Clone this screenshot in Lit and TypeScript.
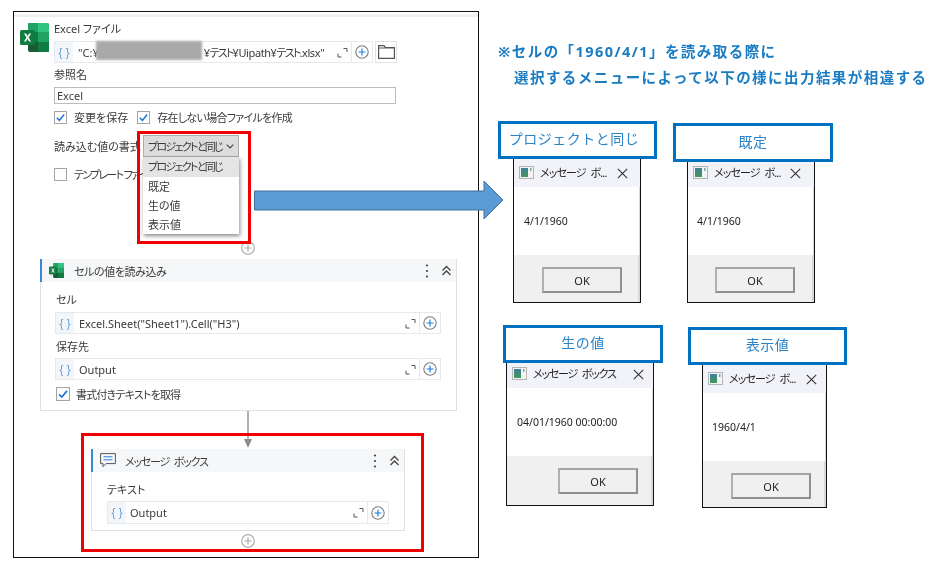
import { LitElement, html, css, svg } from "lit";
import { customElement } from "lit/decorators.js";

interface Dlg { label: string; bx: number; by: number; bw: number; bh: number; dx: number; dy: number; dw: number; dh: number; title: string; value: string; barH: number; bodyH: number; xRight: number; textLeft: number; okLeft: number; tagShift: number; titleSp: number }

const DIALOGS: Dlg[] = [
  { label: "プロジェクトと同じ", bx: 498, by: 121, bw: 159, bh: 38, dx: 513, dy: 159, dw: 128, dh: 144, title: "メッセージ ボ...", value: "4/1/1960", barH: 28, bodyH: 68, xRight: 12, textLeft: 10, okLeft: 28, tagShift: 7, titleSp: -0.9 },
  { label: "既定", bx: 673, by: 123, bw: 160, bh: 39, dx: 687, dy: 162, dw: 128, dh: 141, title: "メッセージ ボ...", value: "4/1/1960", barH: 25, bodyH: 68, xRight: 13, textLeft: 9, okLeft: 27, tagShift: 0, titleSp: -0.9 },
  { label: "生の値", bx: 503, by: 325, bw: 160, bh: 38, dx: 506, dy: 363, dw: 148, dh: 143, title: "メッセージ ボックス", value: "04/01/1960 00:00:00", barH: 25, bodyH: 68, xRight: 9, textLeft: 10, okLeft: 51, tagShift: 0, titleSp: -1.2 },
  { label: "表示値", bx: 688, by: 327, bw: 159, bh: 38, dx: 702, dy: 365, dw: 125, dh: 143, title: "メッセージ ボ...", value: "1960/4/1", barH: 28, bodyH: 68, xRight: 9, textLeft: 9, okLeft: 28, tagShift: 0, titleSp: -0.9 },
];

const excelIcon = (s: number) => html`<svg class="xl" width=${s} height=${s} viewBox="0 0 29 29">
  <path d="M8 0h19a2 2 0 0 1 2 2v7H8z" fill="#21a366"/><path d="M18 0h9a2 2 0 0 1 2 2v7H18z" fill="#33c481"/>
  <rect x="8" y="9" width="10" height="10" fill="#107c41"/><rect x="18" y="9" width="11" height="10" fill="#21a366"/>
  <path d="M8 19h21v8a2 2 0 0 1-2 2H10a2 2 0 0 1-2-2z" fill="#185c37"/><rect x="18" y="19" width="11" height="10" rx="1" fill="#107c41"/>
  <rect x="0" y="7" width="15" height="15" rx="1.5" fill="#107c41"/>
  <path d="M4 10.5h2.100l1.500 2.800 1.500-2.800h2l-2.500 4 2.500 4H9l-1.500-2.800L6 18.500H4l2.500-4z" fill="#fff"/>
</svg>`;

const plusIcon = svg`<circle cx="7" cy="7" r="6.200" fill="#fff" stroke="#7d7d7d" stroke-width="1.100"/><path d="M7 3.500v7M3.500 7h7" stroke="#1f80e0" stroke-width="1.200"/>`;
const expand = html`<svg class="exp" width="11" height="11" viewBox="0 0 11 11" fill="none" stroke="#555" stroke-width="1"><path d="M6.500 1.500h3.500v3.500M1 6.500v3.500h3.500"/></svg>`;
const plus = html`<span class="plusCell"><svg width="14" height="14" viewBox="0 0 14 14">${plusIcon}</svg></span>`;
const nodePlus = html`<svg width="14" height="14" viewBox="0 0 14 14"><circle cx="7" cy="7" r="6.300" fill="#fff" stroke="#b0b0b0" stroke-width="1.200"/><path d="M7 3.500v7M3.500 7h7" stroke="#a8a8a8" stroke-width="1.200"/></svg>`;
const check = html`<svg class="cb" width="13" height="13" viewBox="0 0 13 13"><rect x=".5" y=".5" width="12" height="12" fill="#fff" stroke="#a5a5a5"/><path d="M2.800 6.800l2.600 2.600 4.800-5.800" fill="none" stroke="#1b74d0" stroke-width="1.500"/></svg>`;
const chevrons = html`<svg class="chev" width="11" height="11" viewBox="0 0 11 11" fill="none" stroke="#444" stroke-width="1.300"><path d="M1.500 5.500l4-4 4 4M1.500 10l4-4 4 4"/></svg>`;
const dots = html`<svg class="dots" width="4" height="14" viewBox="0 0 4 14" fill="#444"><circle cx="2" cy="1.500" r="1.100"/><circle cx="2" cy="7" r="1.100"/><circle cx="2" cy="12.500" r="1.100"/></svg>`;

@customElement("app-root")
export class AppRoot extends LitElement {
  static styles = css`
    :host { display: block; width: 941px; height: 568px; position: relative; overflow: hidden; background: #fff; filter: blur(.35px);
      font-family: "Noto Sans", "Noto Sans CJK JP", sans-serif; font-size: 11px; color: #3a3a3a; font-feature-settings: "palt"; }
    .panel { position: absolute; left: 13px; top: 11px; width: 466px; height: 547px; box-sizing: border-box; border: 1px solid #111;
      display: flex; flex-direction: column; }
    .band { height: 3px; background: #f0f0f0; margin-top: 2px; flex: none; }
    .file { display: flex; gap: 5px; margin: 6px 0 0 6px; }
    .xl { flex: none; display: block; }
    .col { display: flex; flex-direction: column; }
    .lbl { line-height: 12px; height: 12px; white-space: nowrap; }
    .mb { margin-bottom: 6px; }
    .mt { margin-top: 6px; }
    .fieldRow { display: flex; gap: 2px; }
    .field { display: flex; align-items: center; height: 22px; box-sizing: border-box; border: 1px solid #e6e9ee; background: #fff; white-space: nowrap; }
    .brace { align-self: stretch; width: 18px; flex: none; background: #f3f6f9; color: #2f7fd0; display: flex; align-items: center; justify-content: center; font-size: 12px; font-weight: 300; }
    .val { flex: 1; padding-left: 5px; display: flex; align-items: center; min-width: 0; }
    .exp { flex: none; margin-right: 3px; }
    .plusCell { align-self: stretch; width: 20px; flex: none; border-left: 1px solid #e6e9ee; display: flex; align-items: center; justify-content: center; }
    .w319 { width: 319px; }
    .blurred { display: inline-block; width: 106px; height: 19px; margin: -3px 2px 0 -3px; background: #a9a9a9; filter: blur(1px); flex: none; }
    .tail { letter-spacing: -.4px; }
    .tail b { font-weight: 400; letter-spacing: -1.800px; }
    .folder { width: 22px; height: 22px; box-sizing: border-box; border: 1px solid #dfe3e9; display: flex; align-items: center; justify-content: center; flex: none; }
    .text { width: 342px; height: 17px; box-sizing: border-box; border: 1px solid #bcbcbc; padding-left: 2px; line-height: 15px; margin-bottom: 7px; }
    .checks { display: flex; align-items: center; height: 12px; white-space: nowrap; }
    .checks .cb { margin-right: 7px; flex: none; }
    .second { margin-left: 9px; display: flex; align-items: center; letter-spacing: -.7px; }
    .fmt { display: flex; align-items: center; height: 22px; margin: 12px 0 11px; }
    .fmtLbl { width: 89px; flex: none; white-space: nowrap; }
    .dd { position: relative; width: 96px; flex: none; }
    .ddBtn { height: 22px; box-sizing: border-box; border: 1px solid #adadad; background: #dcdcdc; display: flex; align-items: center; padding-left: 4px; gap: 4px; white-space: nowrap; letter-spacing: -1.700px; }
    .ddList { position: absolute; left: 0; top: 22px; width: 96px; background: #fff; box-shadow: 1px 2px 4px rgba(0,0,0,.45); z-index: 2; }
    .ddItem { height: 19px; line-height: 19px; padding-left: 5px; white-space: nowrap; letter-spacing: -1.700px; }
    .ddItem.plain { letter-spacing: 0; }
    .ddItem.on { background: #e4e4e4; height: 20px; }
    .tpl { letter-spacing: -1.700px; }
    .gapPlus { height: 79px; flex: none; display: flex; align-items: flex-end; padding: 0 0 4px 227px; box-sizing: border-box; }
    .card { box-sizing: border-box; border: 1px solid #dde1e6; flex: none; }
    .c1 { margin-left: 26px; width: 417px; height: 152px; }
    .c2 { margin-left: 77px; width: 314px; height: 82px; }
    .head { display: flex; align-items: center; background: #f6f7f8; height: 23px; border-left: 2px solid #3a86d0; margin: -1px 0 0 -1px; }
    .head .ttl { flex: 1; white-space: nowrap; }
    .c1 .ttl { letter-spacing: -.4px; }
    .c2 .ttl { letter-spacing: -1.200px; word-spacing: 3px; }
    .c1 .head .xl { margin: 0 10px 0 7px; }
    .msg { margin: 0 9px 0 7px; flex: none; }
    .dots { margin-right: 12px; }
    .chev { margin-right: 4px; }
    .body { display: flex; flex-direction: column; }
    .c1 .body { padding: 12px 15px 0 14px; }
    .c2 .body { padding: 12px 15px 0 15px; }
    .c1 .lbl { margin-left: 1px; }
    .c2 .lbl { margin-bottom: 5px; }
    .c2 .field { height: 23px; }
    .c2 .val { padding-left: 4px; }
    .c1 .gapTop { margin: 7px 0 5px 1px; }
    .taskCheck { display: flex; align-items: center; gap: 6px; margin: 6px 0 0 1px; white-space: nowrap; letter-spacing: -.8px; }
    .taskCheck .cb { width: 14px; height: 14px; }
    .conn { height: 38px; flex: none; margin-left: 228px; display: block; }
    .lastPlus { flex: none; margin: 3px 0 0 227px; display: block; }
    .redbox { position: absolute; box-sizing: border-box; border: 3px solid #f00000; z-index: 3; pointer-events: none; }
    .r1 { left: 137px; top: 131px; width: 114px; height: 113px; }
    .r2 { left: 81px; top: 433px; width: 343px; height: 119px; }
    .arrow { position: absolute; left: 254px; top: 180px; z-index: 1; }
    .note { position: absolute; left: 498px; top: 38px; font-weight: 700; font-size: 14.500px; color: #1a7cc2; line-height: 26px; white-space: nowrap; letter-spacing: 1.450px; font-feature-settings: normal; }
    .note div + div { padding-left: 16px; }
    .tag { position: absolute; box-sizing: border-box; border: 3px solid #0070c0; background: #fff; color: #2a84c8; font-size: 14px; display: flex; align-items: center; justify-content: center; white-space: nowrap; z-index: 2; letter-spacing: .5px; font-feature-settings: normal; padding-bottom: 4px; }
    .dlg { position: absolute; box-sizing: border-box; border: 1px solid #111; border-top: none; background: #f0f0f0; display: flex; flex-direction: column; box-shadow: inset -2px 0 0 #d8d8d8; }
    .bar { background: #f2f3f9; display: flex; align-items: flex-end; padding: 0 9px 8px 5px; flex: none; box-sizing: border-box; white-space: nowrap; color: #222; font-size: 11px; }
    .bar .t { flex: 1; margin-left: 6px; line-height: 12px; word-spacing: 3px; }
    .dIcon { flex: none; }
    .dBody { background: #fff; flex: none; display: flex; align-items: center; color: #222; font-size: 10.500px; margin-right: 1px; }
    .ok { width: 80px; height: 26px; box-sizing: border-box; margin-top: 12px; border: 2px solid #8f8f8f; border-top-color: #a5a5a5; border-left-color: #b0b0b0; background: #f0f0f0; color: #222; font-size: 11px; display: flex; align-items: center; justify-content: center; }
  `;

  private field(v: unknown, cls = "") {
    return html`<div class="field ${cls}"><span class="brace">{ }</span><span class="val">${v}</span>${expand}${plus}</div>`;
  }

  private dlgIcon() {
    return html`<svg class="dIcon" width="15" height="13" viewBox="0 0 15 13"><defs><linearGradient id="g" x1="0" y1="0" x2="0" y2="1"><stop offset="0" stop-color="#3f7f9c"/><stop offset="1" stop-color="#3d9a58"/></linearGradient></defs><rect x=".5" y=".5" width="14" height="12" fill="#f4f4f4" stroke="#b4b4b4"/><rect x="2" y="2" width="7" height="9" fill="url(#g)"/><rect x="11" y="2" width="1.500" height="3" fill="#7fa7a0"/></svg>`;
  }

  render() {
    return html`
      <div class="panel">
        <div class="band"></div>
        <div class="file">
          ${excelIcon(29)}
          <div class="col">
            <div class="lbl mb">Excel ファイル</div>
            <div class="fieldRow">
              ${this.field(html`"C:¥<span class="blurred"></span><span class="tail">¥<b>テスト</b>¥Uipath¥<b>テスト</b>.xlsx"</span>`, "w319")}
              <div class="folder"><svg width="17" height="14" viewBox="0 0 17 14" fill="none" stroke="#555" stroke-width="1.200"><path d="M.6 13.400V.6h5.400l1.600 2h8.800v10.800zM.6 3h15.800"/></svg></div>
            </div>
            <div class="lbl mt mb">参照名</div>
            <div class="text">Excel</div>
            <div class="checks">${check}<span>変更を保存</span><span class="second">${check}<span>存在しない場合ファイルを作成</span></span></div>
            <div class="fmt">
              <span class="fmtLbl">読み込む値の書式</span>
              <div class="dd">
                <div class="ddBtn">プロジェクトと同じ<svg width="8" height="5" viewBox="0 0 8 5" fill="none" stroke="#444" stroke-width="1.100"><path d="M.7.7L4 4l3.300-3.300"/></svg></div>
                <div class="ddList">
                  <div class="ddItem on">プロジェクトと同じ</div>
                  <div class="ddItem plain">既定</div>
                  <div class="ddItem plain">生の値</div>
                  <div class="ddItem plain">表示値</div>
                </div>
              </div>
            </div>
            <div class="checks"><svg class="cb" width="13" height="13" viewBox="0 0 13 13"><rect x=".5" y=".5" width="12" height="12" fill="#fff" stroke="#a5a5a5"/></svg><span class="tpl">テンプレート ファイ</span></div>
          </div>
        </div>
        <div class="gapPlus">${nodePlus}</div>
        <div class="card c1">
          <div class="head">${excelIcon(15)}<span class="ttl">セルの値を読み込み</span>${dots}${chevrons}</div>
          <div class="body">
            <div class="lbl mb">セル</div>
            ${this.field("Excel.Sheet(\"Sheet1\").Cell(\"H3\")")}
            <div class="lbl gapTop">保存先</div>
            ${this.field("Output")}
            <div class="taskCheck">${check}<span>書式付きテキストを取得</span></div>
          </div>
        </div>
        <svg class="conn" width="12" height="38" viewBox="0 0 12 38"><rect x="5" y="0" width="2" height="29" fill="#b0b0b0"/><path d="M2 28h8l-4 9z" fill="#8c8c8c"/></svg>
        <div class="card c2">
          <div class="head">
            <svg class="msg" width="16" height="15" viewBox="0 0 16 15" fill="none"><path d="M.6.6h14.800v10H6l-3 3v-3H.6z" stroke="#555" stroke-width="1"/><path d="M3.500 3.800h9M3.500 6.800h9" stroke="#1f80e0" stroke-width="1"/></svg>
            <span class="ttl">メッセージ ボックス</span>${dots}${chevrons}
          </div>
          <div class="body">
            <div class="lbl mb">テキスト</div>
            ${this.field("Output")}
          </div>
        </div>
        <div class="lastPlus">${nodePlus}</div>
      </div>

      <div class="redbox r1"></div>
      <div class="redbox r2"></div>

      <svg class="arrow" width="250" height="40" viewBox="0 0 250 40"><path d="M.5 11h229.500V1l19 19-19 19V30H.5z" fill="#5b9bd5" stroke="#41719c"/></svg>

      <div class="note"><div>※セルの「1960/4/1」を読み取る際に</div><div>選択するメニューによって以下の様に出力結果が相違する</div></div>

      ${DIALOGS.map((d) => html`
        <div class="tag" style="left:${d.bx}px;top:${d.by}px;width:${d.bw}px;height:${d.bh}px;padding-right:${d.tagShift}px">${d.label}</div>
        <div class="dlg" style="left:${d.dx}px;top:${d.dy}px;width:${d.dw}px;height:${d.dh}px">
          <div class="bar" style="height:${d.barH}px;padding-right:${d.xRight}px">${this.dlgIcon()}<span class="t" style="letter-spacing:${d.titleSp}px">${d.title}</span>
            <svg width="11" height="11" viewBox="0 0 11 11" stroke="#333" stroke-width="1.100"><path d="M.8.8l9.400 9.400M10.200.8L.8 10.200"/></svg></div>
          <div class="dBody" style="height:${d.bodyH}px;padding-left:${d.textLeft}px">${d.value}</div>
          <div class="ok" style="margin-left:${d.okLeft}px">OK</div>
        </div>`)}
    `;
  }
}
